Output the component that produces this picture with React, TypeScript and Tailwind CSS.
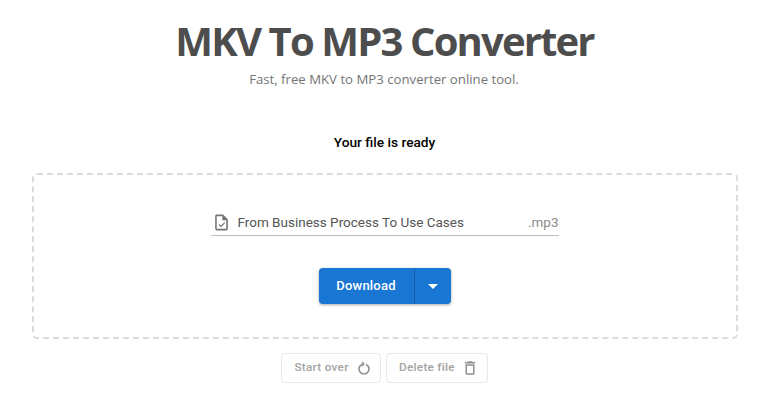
function ReplayIcon() {
  return (
    <svg viewBox="0 0 24 24" className="w-[16px] h-[16px] fill-none stroke-[#8f8f8f]">
      <path d="M9 6.6a7.5 7.5 0 1 0 6 0" strokeWidth="2.4" />
      <path d="M9.5 2.5l3.2 3.5-3.2 3.5z" className="fill-[#8f8f8f]" strokeWidth="1" />
    </svg>
  );
}

function DeleteIcon() {
  return (
    <svg viewBox="0 0 24 24" className="w-[18px] h-[18px] fill-[#8f8f8f]">
      <path d="M6 19c0 1.1.9 2 2 2h8c1.1 0 2-.9 2-2V7H6v12zM8 9h8v10H8V9zm7.5-5l-1-1h-5l-1 1H5v2h14V4z" />
    </svg>
  );
}

function FileIcon() {
  return (
    <svg viewBox="0 0 24 24" className="w-[19px] h-[19px] fill-[#757575]">
      <path d="M14 2H6c-1.1 0-2 .9-2 2v16c0 1.1.9 2 2 2h12c1.1 0 2-.9 2-2V8l-6-6zm4 18H6V4h7v5h5v11z" />
      <path d="M16.6 12.6l-5.3 5.3-2.9-2.9 1-1 1.9 1.9 4.3-4.3z" />
    </svg>
  );
}

export default function App() {
  return (
    <div className="w-[768px] h-[416px] overflow-hidden bg-white flex flex-col items-center font-['Roboto',sans-serif]">
      <h1 className="mt-[11px] ml-px h-[58px] leading-[60px] text-[40px] font-bold tracking-[-1.85px] text-[#4d4d4d] font-['Open_Sans',sans-serif]">
        MKV To MP3 Converter
      </h1>
      <p className="h-[20px] leading-[20px] text-[13.2px] text-[#757575] font-['Open_Sans',sans-serif]">
        Fast, free MKV to MP3 converter online tool.
      </p>
      <div className="mt-[43px] ml-px h-[20px] leading-[20px] text-[13.7px] font-medium text-black">Your file is ready</div>
      <div className="mt-[21px] ml-px w-[706px] h-[166px] border-2 border-dashed border-[#dcdcdc] rounded-[5px] flex flex-col items-center">
        <div className="mt-[27px] w-[348px] h-[34px] border-b border-[#bdbdbd] flex items-center pl-[1px] pt-[8px] pb-[1px]">
          <FileIcon />
          <span className="ml-[7px] text-[13.5px] text-[#555555]">From Business Process To Use Cases</span>
          <span className="ml-auto text-[13.5px] text-[#8a8a8a]">.mp3</span>
        </div>
        <div className="mt-[32px] h-[36px] flex rounded-[4px] bg-[#1976d2] text-white shadow-[0_1px_3px_rgba(0,0,0,0.35)]">
          <button className="w-[96px] border-r border-[#145ea8] text-[13px] font-medium tracking-[0.2px]">Download</button>
          <button className="w-[36px] flex items-center justify-center">
            <span className="w-0 h-0 border-x-[5px] border-x-transparent border-t-[5px] border-t-white" />
          </button>
        </div>
      </div>
      <div className="mt-[14px] ml-px flex gap-[5px]">
        <button className="w-[100px] h-[30px] pl-[4px] border border-[#e8e8e8] rounded-[4px] flex items-center justify-center gap-[7px] text-[11.7px] font-medium tracking-[0.3px] text-[#a3a3a3]">
          Start over
          <ReplayIcon />
        </button>
        <button className="w-[102px] h-[30px] pl-[4px] border border-[#e8e8e8] rounded-[4px] flex items-center justify-center gap-[6px] text-[11.7px] font-medium tracking-[0.3px] text-[#a3a3a3]">
          Delete file
          <DeleteIcon />
        </button>
      </div>
    </div>
  );
}
